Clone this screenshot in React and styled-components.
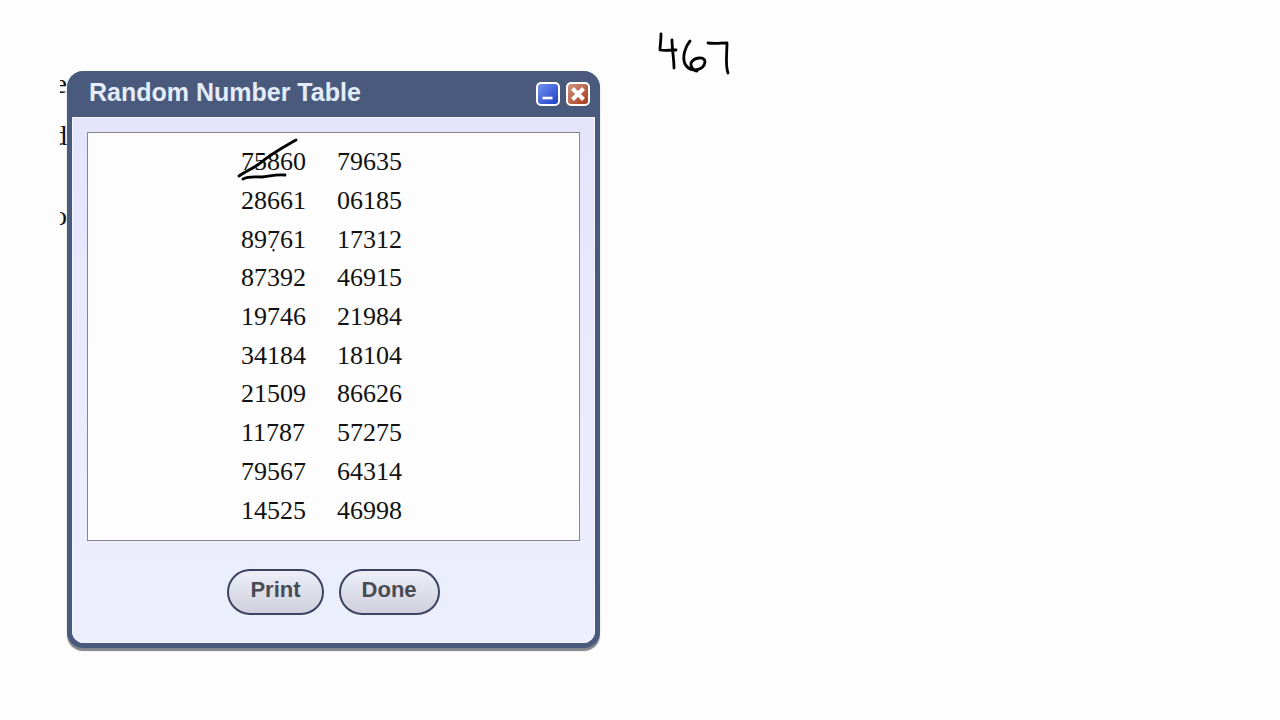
import React from 'react';
import styled, { createGlobalStyle } from 'styled-components';

const numbers = [
    ['75860', '79635'],
    ['28661', '06185'],
    ['89761', '17312'],
    ['87392', '46915'],
    ['19746', '21984'],
    ['34184', '18104'],
    ['21509', '86626'],
    ['11787', '57275'],
    ['79567', '64314'],
    ['14525', '46998'],
]

export default function App() {
    return (
        <Page>
            <GlobalStyle />
            <Margin aria-hidden="true">
                <Letter $top={66}>e</Letter>
                <Letter $top={16}>d</Letter>
                <Letter $top={44}>o</Letter>
            </Margin>
            <Dialog>
                <Header>
                    <h1>Random Number Table</h1>
                    <WindowButton aria-label="Minimize" $from="#6f92f0" $to="#1f3fc4">
                        <svg width="20" height="20" viewBox="0 0 20 20">
                            <path d="M4.500 14H14.500" stroke="#fff" strokeWidth="2.600" />
                        </svg>
                    </WindowButton>
                    <WindowButton aria-label="Close" $from="#cf9484" $to="#a83c1c">
                        <svg width="20" height="20" viewBox="0 0 20 20">
                            <path d="M4.500 4.500L15.500 15.500M15.500 4.500L4.500 15.500" stroke="#fff" strokeWidth="4" />
                        </svg>
                    </WindowButton>
                </Header>
                <Body>
                    <Panel>
                        <Table>
                            <tbody>
                                {numbers.map(row =>
                                    <tr key={row[0]}>
                                        {row.map(number => <td key={number}>{number}</td>)}
                                    </tr>
                                )}
                            </tbody>
                        </Table>
                    </Panel>
                    <Actions>
                        <Button>Print</Button>
                        <Button>Done</Button>
                    </Actions>
                </Body>
            </Dialog>
            <Ink viewBox="0 0 1280 720">
                <path d="M239 176C246 171 252 169 259 164C271 154 282 148 296 140" />
                <path d="M243 179C249 176 254 177 262 177C270 176 277 174 285 175" />
                <path d="M273.500 250V250.500" strokeWidth="2" />
                <path d="M661 34C661 41 660 46 660 50C665 51 670 50 676 50M672 40C672 49 674 59 674 68" />
                <path d="M690 41C685 47 682 57 685 64C690 73 704 71 705 62C705 56 694 57 691 63C690 67 694 71 697 71" />
                <path d="M708 43C715 44 721 43 727 43C727 53 725 65 728 73" />
            </Ink>
        </Page>
    )
}

const GlobalStyle = createGlobalStyle`
    * {
        box-sizing: border-box;
    }

    body {
        margin: 0;
        background: #fdfdfd;
    }
`

const Page = styled.main`
    position: relative;
    display: flex;
    align-items: flex-start;
    min-height: 100vh;
    padding: 0 60px;
`

const Margin = styled.div`
    display: flex;
    flex-direction: column;
    flex: none;
    width: 7px;
    overflow: hidden;
    font: 28px/36px "Liberation Serif", serif;
    color: #111;
`

const Letter = styled.span`
    display: flex;
    justify-content: flex-end;
    margin-top: ${props => props.$top}px;
`

const Dialog = styled.section`
    flex: 0 1 533px;
    margin-top: 71px;
    border: 5px solid #4a5a7d;
    border-top: none;
    border-radius: 16px;
    background: #4a5a7d;
    box-shadow: 0 3px 1px #82858b;
`

const Header = styled.header`
    display: flex;
    align-items: center;
    gap: 6px;
    height: 46px;
    padding: 0 5px 0 17px;

    h1 {
        flex: 1;
        margin: 0 0 4px;
        font: bold 25px/30px "Liberation Sans", Arial, sans-serif;
        color: #e4edfb;
    }
`

const WindowButton = styled.button`
    display: flex;
    align-items: center;
    justify-content: center;
    width: 24px;
    height: 24px;
    padding: 0;
    border: 2px solid #fff;
    border-radius: 5px;
    background: linear-gradient(135deg, ${props => props.$from}, ${props => props.$to});
`

const Body = styled.div`
    padding: 15px;
    border-radius: 0 0 12px 12px;
    background: linear-gradient(#e4e5fb, #eeeffd);
    box-shadow: inset 0 0 0 1px #f4f5ff;
`

const Panel = styled.div`
    display: flex;
    justify-content: center;
    height: 409px;
    padding: 10px 24px 10px 0;
    border: 1px solid #85858c;
    background: #fdfdfd;
`

const Table = styled.table`
    height: 387px;
    border-spacing: 0;
    font: 26px/30px "Liberation Serif", "Times New Roman", serif;
    color: #111;

    td {
        padding: 0;
    }

    td + td {
        padding-left: 31px;
    }
`

const Actions = styled.div`
    display: flex;
    justify-content: center;
    gap: 15px;
    padding: 28px 0 13px;
`

const Button = styled.button`
    height: 46px;
    padding: 0 21px 4px;
    border: 2px solid #3c4260;
    border-radius: 23px;
    background: linear-gradient(#eceef8, #cfd0dc);
    font: bold 22px/30px "Liberation Sans", Arial, sans-serif;
    color: #484b54;
`

/* pen strokes drawn over the page */
const Ink = styled.svg`
    position: absolute;
    top: 0;
    left: 0;
    width: 1280px;
    height: 720px;
    pointer-events: none;
    fill: none;
    stroke: #000;
    stroke-width: 2.8;
    stroke-linecap: round;
    stroke-linejoin: round;
`
